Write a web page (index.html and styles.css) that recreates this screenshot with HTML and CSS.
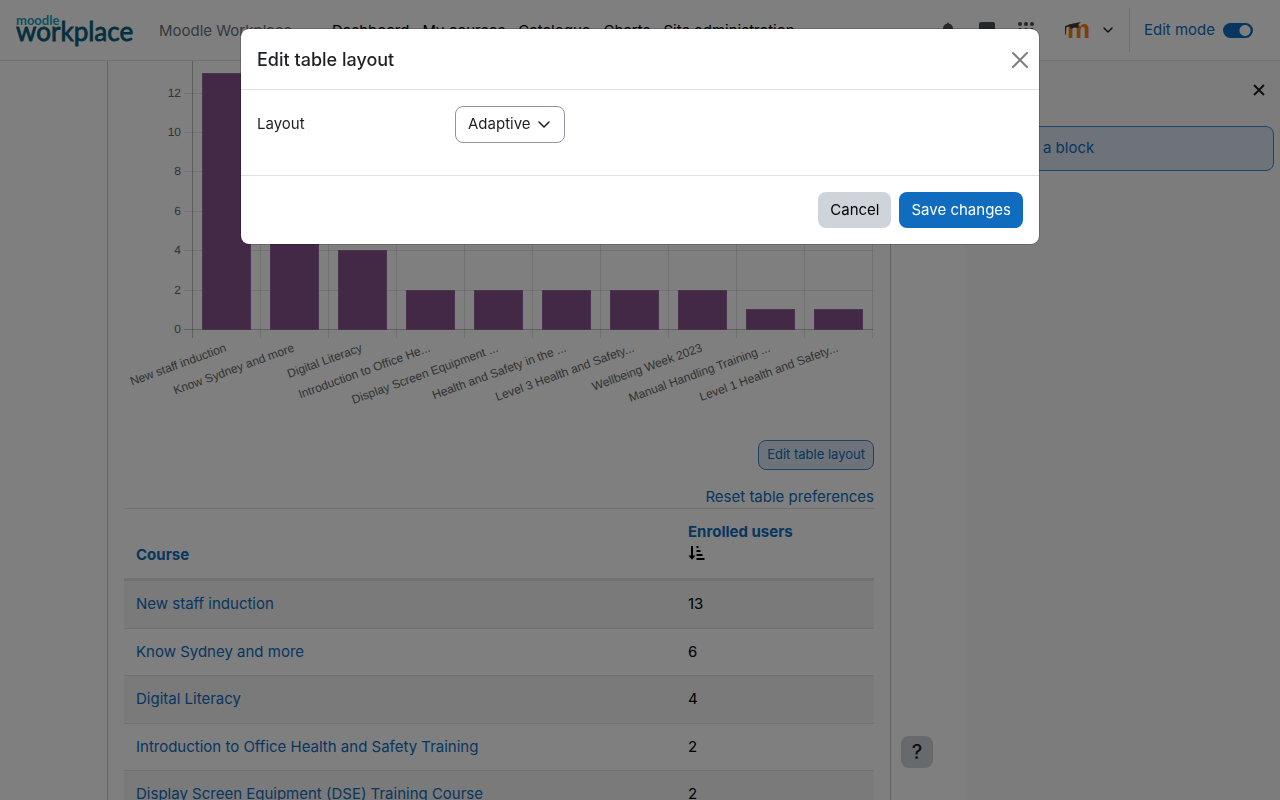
FILE: index.html
```html
<!DOCTYPE html>
<html lang="en">
<head>
  <meta charset="UTF-8" />
  <meta name="viewport" content="width=device-width, initial-scale=1.0"/>
  <title>Popular courses | Moodle Workplace</title>
  <link rel="stylesheet" href="styles.css">
</head>
<body>
  <header class="navbar">
    <a class="logo" href="#" aria-label="Moodle Workplace home">
      <svg width="116" height="36" viewBox="0 0 116 36">
        <text class="logo-small" x="0" y="13">moodle</text>
        <text class="logo-big" x="0" y="29">workplace</text>
      </svg>
    </a>
    <a class="site-name" href="#">Moodle Workplace</a>
    <nav class="main-nav">
      <a href="#">Dashboard</a>
      <a href="#">My courses</a>
      <a href="#">Catalogue</a>
      <a href="#">Charts</a>
      <a href="#">Site administration</a>
    </nav>
    <div class="nav-tools">
      <button class="icon-btn" aria-label="Notifications">
        <svg width="16" height="16" viewBox="0 0 16 16"><path d="M8 .5a1 1 0 0 1 1 1v.3a5 5 0 0 1 4 4.900c0 3 .7 4.200 1.700 5.500H1.300C2.300 10.900 3 9.700 3 6.700a5 5 0 0 1 4-4.900v-.3a1 1 0 0 1 1-1zM6 13.500h4a2 2 0 0 1-4 0z"/></svg>
      </button>
      <button class="icon-btn" aria-label="Messages">
        <svg width="16" height="16" viewBox="0 0 16 16"><path d="M2 0h12a2 2 0 0 1 2 2v8a2 2 0 0 1-2 2h-4l-4 3.500V12H2a2 2 0 0 1-2-2V2a2 2 0 0 1 2-2z"/></svg>
      </button>
      <button class="icon-btn" aria-label="Workplace launcher">
        <svg width="16" height="16" viewBox="0 0 16 16">
          <circle cx="2" cy="2" r="2"/><circle cx="8" cy="2" r="2"/><circle cx="14" cy="2" r="2"/>
          <circle cx="2" cy="8" r="2"/><circle cx="8" cy="8" r="2"/><circle cx="14" cy="8" r="2"/>
          <circle cx="2" cy="14" r="2"/><circle cx="8" cy="14" r="2"/><circle cx="14" cy="14" r="2"/>
        </svg>
      </button>
      <button class="user-menu" aria-label="User menu">
        <svg width="26" height="20" viewBox="0 0 26 20">
          <text class="avatar-m" x="2" y="18">m</text>
          <path d="M0 6 8 3.500 16 2 13.500 4.300 13.500 8Q9 6.500 5.500 9L5 6.500 1.500 7Q.8 10 1 14.500H.2Q-.2 10 0 6z" fill="#3c3c3c"/>
        </svg>
        <svg class="chevron" width="10" height="6" viewBox="0 0 10 6"><path d="M1 1l4 4 4-4"/></svg>
      </button>
      <label class="edit-mode">Edit mode <input type="checkbox" role="switch" checked></label>
    </div>
  </header>

  <div class="page">
    <main class="content">
      <section class="report">
        <svg class="chart" viewBox="0 0 750 379" role="img" aria-label="Enrolled users per course">
          <g id="chart"></g>
        </svg>
        <div class="report-actions">
          <button class="btn btn-outline">Edit table layout</button>
        </div>
        <div class="report-reset"><a href="#">Reset table preferences</a></div>
        <table>
          <thead>
            <tr>
              <th class="col-course"><a href="#">Course</a></th>
              <th>
                <a href="#">Enrolled users</a><br>
                <svg class="sort" width="17" height="14" viewBox="0 0 17 14">
                  <path d="M3 0h2v9.500h2.500L4 13.800.3 9.500H3zM8.500 0h2v2h-2zM8.500 4h4v2h-4zM8.500 8h6v2h-6zM8.500 12h8v2h-8z"/>
                </svg>
              </th>
            </tr>
          </thead>
          <tbody>
            <tr><td><a href="#">New staff induction</a></td><td>13</td></tr>
            <tr><td><a href="#">Know Sydney and more</a></td><td>6</td></tr>
            <tr><td><a href="#">Digital Literacy</a></td><td>4</td></tr>
            <tr><td><a href="#">Introduction to Office Health and Safety Training</a></td><td>2</td></tr>
            <tr><td><a href="#">Display Screen Equipment (DSE) Training Course</a></td><td>2</td></tr>
          </tbody>
        </table>
      </section>
    </main>
    <aside class="drawer">
      <div class="drawer-header">
        <button class="icon-btn" aria-label="Close block drawer">
          <svg class="cross" width="12" height="12" viewBox="0 0 12 12"><path d="M1 1l10 10M11 1L1 11"/></svg>
        </button>
      </div>
      <button class="add-block">Add a block</button>
    </aside>
  </div>

  <button class="help" aria-label="Help">?</button>

  <div class="backdrop">
    <div class="modal" role="dialog" aria-labelledby="modalTitle">
      <div class="modal-header">
        <h5 id="modalTitle">Edit table layout</h5>
        <button class="icon-btn" aria-label="Close">
          <svg class="close" width="16" height="16" viewBox="0 0 16 16"><path d="M1 1l14 14M15 1L1 15"/></svg>
        </button>
      </div>
      <div class="modal-body">
        <label for="layout">Layout</label>
        <div class="select">
          <select id="layout">
            <option>Adaptive</option>
            <option>Cards</option>
            <option>Table</option>
          </select>
          <svg class="chevron" width="12" height="8" viewBox="0 0 12 8"><path d="M1 1l5 5 5-5"/></svg>
        </div>
      </div>
      <div class="modal-footer">
        <button class="btn btn-secondary">Cancel</button>
        <button class="btn btn-primary">Save changes</button>
      </div>
    </div>
  </div>

  <script>
    const data = [
      ["New staff induction", 13],
      ["Know Sydney and more", 6],
      ["Digital Literacy", 4],
      ["Introduction to Office He...", 2],
      ["Display Screen Equipment ...", 2],
      ["Health and Safety in the ...", 2],
      ["Level 3 Health and Safety...", 2],
      ["Wellbeing Week 2023", 2],
      ["Manual Handling Training ...", 1],
      ["Level 1 Health and Safety...", 1]
    ];
    const left = 68, bottom = 268, step = 68, unit = 19.7;
    let out = "";

    // horizontal grid and scale
    for (let v = 0; v <= 12; v += 2) {
      const y = Math.floor(bottom + 0.5 - v * unit);
      out += `<path class="${v ? "grid" : "axis"}" d="M${left - 8} ${y}.5H749"/>`;
      out += `<text class="tick" x="57" y="${y + 4}">${v}</text>`;
    }
    // vertical grid
    for (let i = 0; i <= data.length; i++) {
      out += `<path class="${i ? "grid" : "axis"}" d="M${left + i * step}.5 0V277"/>`;
    }
    // bars with their labels
    data.forEach(([name, value], i) => {
      const x = left + i * step, h = Math.round(value * unit);
      out += `<rect class="bar" x="${x + 10}.5" y="${bottom - h}.5" width="48" height="${h}"/>`;
      out += `<text class="tick" transform="translate(${x + 35} 290) rotate(-20)">${name}</text>`;
    });
    document.getElementById("chart").innerHTML = out;
  </script>
</body>
</html>
```
FILE: styles.css
```css
* {
  box-sizing: border-box;
}
body {
  margin: 0;
  height: 100vh;
  overflow: hidden;
  display: flex;
  flex-direction: column;
  font-family: Inter, sans-serif;
  font-size: 15px;
  line-height: 1.5;
  color: #1d2125;
  background: #fff;
}
a {
  color: #0f6cbf;
  text-decoration: none;
}
button, select {
  font: inherit;
  color: inherit;
  cursor: pointer;
}
svg {
  display: block;
}

/* navbar */
.navbar {
  display: flex;
  align-items: center;
  flex: none;
  height: 61px;
  padding: 0 27px 0 16px;
  border-bottom: 1px solid #dee2e6;
  white-space: nowrap;
}
.logo {
  margin-right: 27px;
}
.logo svg {
  overflow: visible;
}
.logo text {
  font-family: Lato, sans-serif;
}
.logo-small {
  font-size: 13px;
  font-weight: 700;
  fill: #12a5c0;
}
.logo-big {
  font-size: 26px;
  fill: #0a5f7c;
  stroke: #0a5f7c;
  stroke-width: 0.8;
}
.site-name {
  color: #6a737b;
  margin-right: 33px;
  padding-top: 2px;
}
.main-nav {
  display: flex;
  gap: 13px;
  padding: 2px 7px 0;
}
.main-nav a {
  color: #000;
}
.nav-tools {
  display: flex;
  align-items: center;
  margin-left: auto;
  height: 100%;
}
.icon-btn {
  border: none;
  background: none;
  padding: 0;
}
.nav-tools .icon-btn {
  width: 39px;
  display: flex;
  justify-content: center;
}
.nav-tools .icon-btn svg {
  fill: #495057;
}
.user-menu {
  display: flex;
  align-items: center;
  gap: 12px;
  margin: 0 16px 0 19px;
  padding: 0;
  border: none;
  background: none;
}
.user-menu svg {
  overflow: visible;
}
.avatar-m {
  font-family: "Liberation Sans", sans-serif;
  font-weight: 700;
  font-size: 26px;
  fill: #f98012;
}
.chevron {
  fill: none;
  stroke: #1d2125;
  stroke-width: 1.5;
  stroke-linecap: round;
  stroke-linejoin: round;
}
.edit-mode {
  display: flex;
  align-items: center;
  gap: 8px;
  height: 44px;
  padding-left: 14px;
  border-left: 1px solid #dee2e6;
  color: #0f6cbf;
}
.edit-mode input {
  appearance: none;
  width: 30px;
  height: 15px;
  margin: 0;
  border-radius: 8px;
  background: radial-gradient(circle at 22px 50%, #fff 5px, #0f6cbf 6px);
}

/* page */
.page {
  flex: 1;
  min-height: 0;
  display: flex;
}
.content {
  flex: 1;
  min-width: 0;
  padding: 0 74px 0 107px;
}
.report {
  padding: 0 16px;
  border: 1px solid #c8c8c8;
  border-width: 0 1px;
}
.chart {
  width: 100%;
}
.chart .grid {
  stroke: rgba(0, 0, 0, 0.1);
}
.chart .axis {
  stroke: rgba(0, 0, 0, 0.25);
}
.chart .bar {
  fill: #86528c;
  stroke: #94669a;
}
.chart .tick {
  font-family: "Liberation Sans", sans-serif;
  font-size: 12px;
  fill: #666;
  text-anchor: end;
  text-rendering: geometricPrecision;
}
.report-actions {
  display: flex;
  justify-content: flex-end;
  margin-bottom: 16px;
}
.report-reset {
  line-height: 22px;
  text-align: right;
}
table {
  width: 100%;
  border-collapse: collapse;
}
th, td {
  padding: 12px;
  text-align: left;
  vertical-align: bottom;
  border-top: 1px solid #dee2e6;
}
td {
  color: #000;
}
thead th {
  border-bottom: 3px solid #dee2e6;
}
.col-course {
  width: 552px;
}
tbody tr:nth-child(odd) {
  background: #f4f4f4;
}
.sort {
  display: inline-block;
  fill: #000;
}

/* buttons */
.btn {
  height: 36px;
  padding: 0 11px;
  border: 1px solid transparent;
  border-radius: 8px;
}
.btn-outline {
  height: 30px;
  padding: 0 8px;
  font-size: 13px;
  color: #0f6cbf;
  background: #dbe7f0;
  border-color: #3e89cc;
}
.btn-primary {
  color: #fff;
  background: #0f6cbf;
}
.btn-secondary {
  color: #000;
  background: #ced4da;
}
.help {
  position: fixed;
  right: 347px;
  bottom: 32px;
  width: 32px;
  height: 32px;
  padding: 0;
  border: none;
  border-radius: 8px;
  background: #ced4da;
  font-size: 20px;
  font-weight: 500;
  line-height: 32px;
}

/* block drawer */
.drawer {
  width: 315px;
  padding: 0 6px;
  background: #f8f8f8;
}
.drawer-header {
  display: flex;
  justify-content: flex-end;
  align-items: center;
  height: 58px;
  padding-right: 9px;
  margin-bottom: 7px;
}
.cross {
  fill: none;
  stroke: #1d2125;
  stroke-width: 2;
}
.add-block {
  width: 100%;
  height: 45px;
  padding: 0 38px;
  border: 1px solid #3e89cc;
  border-radius: 8px;
  background: #dbe7f0;
  color: #0f6cbf;
  text-align: left;
}

/* modal */
.backdrop {
  position: fixed;
  inset: 0;
  padding: 28px 16px;
  background: rgba(0, 0, 0, 0.5);
}
.modal {
  max-width: 800px;
  margin: 0 auto;
  border: 1px solid rgba(0, 0, 0, 0.18);
  border-radius: 9px;
  background: #fff;
  background-clip: padding-box;
}
.modal-header {
  display: flex;
  align-items: center;
  justify-content: space-between;
  padding: 17px 11px 15px 16px;
  border-bottom: 1px solid #dee2e6;
}
.modal-header h5 {
  margin: 0;
  font-size: 18px;
  font-weight: 500;
  line-height: 28px;
}
.close {
  stroke: #808080;
  stroke-width: 2;
  stroke-linecap: round;
}
.modal-body {
  display: grid;
  grid-template-columns: 198px 1fr;
  align-items: center;
  padding: 16px 16px 32px;
}
.select {
  position: relative;
  justify-self: start;
}
.select select {
  display: block;
  appearance: none;
  width: 110px;
  height: 37px;
  padding: 0 12px;
  border: 1px solid #8f959e;
  border-radius: 8px;
  background: #fff;
}
.select .chevron {
  position: absolute;
  right: 15px;
  top: 15px;
  pointer-events: none;
}
.modal-footer {
  display: flex;
  justify-content: flex-end;
  gap: 8px;
  padding: 16px;
  border-top: 1px solid #dee2e6;
}
```
